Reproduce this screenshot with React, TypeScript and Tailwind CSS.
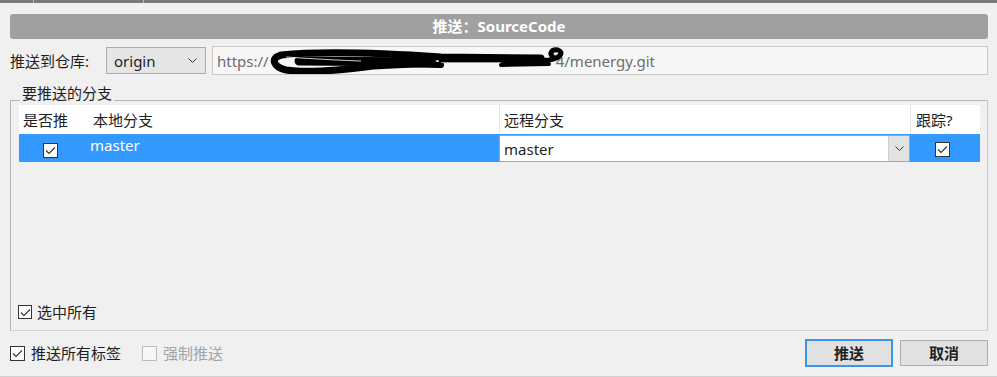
import React from "react";

type CheckProps = {
  checked?: boolean;
  disabled?: boolean;
  size?: number;
};

function Check({ checked = false, disabled = false, size = 15 }: CheckProps) {
  return (
    <span
      className={
        size === 14
          ? "flex h-[14px] w-[14px] shrink-0 items-center justify-center border border-[#333333] bg-white"
          : disabled
            ? "flex h-[15px] w-[15px] shrink-0 items-center justify-center border border-[#bcbcbc] bg-[#f7f7f7]"
            : "flex h-[15px] w-[15px] shrink-0 items-center justify-center border border-[#333333] bg-white"
      }
    >
      {checked && (
        <svg width="11" height="9" viewBox="0 0 11 9" fill="none">
          <polyline points="1,4.5 4,7.5 10,1.5" stroke="#333333" strokeWidth="1.1" />
        </svg>
      )}
    </span>
  );
}

function Chevron() {
  return (
    <svg width="9" height="5" viewBox="0 0 9 5" fill="none">
      <polyline points="0.5,0.5 4.5,4.5 8.5,0.5" stroke="#333333" strokeWidth="1" />
    </svg>
  );
}

// blacked-out part of the url, drawn like a marker scribble
function Scribble() {
  return (
    <svg
      width="296"
      height="27"
      viewBox="268 47 296 27"
      fill="none"
      className="relative z-10 -mr-[9px] shrink-0"
    >
      <g stroke="#000" strokeLinecap="round" strokeLinejoin="round">
        <path d="M278 56 C270 58 272 67 285 70 C305 73 335 71 372 66 L432 63" strokeWidth="7" />
        <path d="M280 55 C320 51 380 53 440 57 L540 58" strokeWidth="7" />
        <path d="M298 61 L430 62" strokeWidth="9" />
        <path d="M390 64 L440 65" strokeWidth="6" />
        <path d="M440 60 C480 60 520 61 548 60 C560 58 563 52 557 50 C550 49 548 54 552 57" strokeWidth="5" />
        <path d="M500 65 L548 64" strokeWidth="4" />
      </g>
      <path d="M440 62.5 L500 62.5" stroke="#9a9a9a" strokeWidth="1" />
      <path d="M285 57 C300 58 330 60 360 61" stroke="#ffffff" strokeWidth="0.8" />
    </svg>
  );
}

export default function App() {
  return (
    <div className="flex h-[377px] w-[997px] flex-col overflow-hidden bg-[#f0f0f0] font-['Noto_Sans','Noto_Sans_CJK_SC',sans-serif] text-[15px] text-[#1e1e1e]">
      {/* strip of the window behind */}
      <div className="flex h-[3px] shrink-0 bg-[#7a7a7a]">
        <div className="w-[33px]" />
        <div className="w-px bg-[#b8b8b8]" />
        <div className="w-[109px]" />
        <div className="w-px bg-[#b8b8b8]" />
      </div>

      <div className="ml-[10px] mr-[9px] mt-[11px] flex h-[25px] items-center justify-center rounded-[3px] bg-[#a0a0a0] text-[15px] font-bold leading-[25px] text-white">
        推送：SourceCode
      </div>

      <div className="ml-[10px] mr-[9px] mt-[7px] flex h-[29px] items-center">
        <div className="w-[96px] leading-[20px]">推送到仓库:</div>
        <div className="flex h-[27px] w-[100px] items-center justify-between border border-[#adadad] bg-[#e5e5e5] pl-[7px] pr-[8px]">
          <span className="leading-[20px]">origin</span>
          <Chevron />
        </div>
        <div className="ml-[6px] flex h-[29px] flex-1 items-center border border-[#c9c9c9] bg-[#f7f7f7] pl-[4px] leading-[20px] text-[#6d6d6d]">
          <span>https://</span>
          <Scribble />
          <span>4/menergy.git</span>
        </div>
      </div>

      <div className="ml-[10px] mr-[9px] mt-[10px] flex flex-col">
        <div className="relative z-10 ml-[10px] h-[17px] w-fit bg-[#f0f0f0] px-[2px] leading-[17px]">
          要推送的分支
        </div>
        <div className="-mt-[2px] flex h-[231px] flex-col border border-[#b5b5b5] border-b-[#d2d2d2] border-r-[#c6c6c6] pb-[8px] pl-[8px] pr-[7px] pt-[4px]">
          <div className="flex h-[29px] bg-white leading-[20px]">
            <div className="flex w-[70px] items-center pl-[4px]">是否推</div>
            <div className="flex w-[410px] items-center pl-[4px]">本地分支</div>
            <div className="flex w-[411px] items-center border-l border-[#e5e5e5] pl-[4px]">远程分支</div>
            <div className="flex w-[70px] items-center border-l border-[#e5e5e5] pl-[5px]">跟踪?</div>
          </div>
          <div className="flex h-[28px] bg-[#3399ff]">
            <div className="flex w-[70px] items-start pl-[24px] pt-[9px]">
              <Check checked />
            </div>
            <div className="w-[410px] pl-[1px] pt-[1px] leading-[20px] text-white">master</div>
            <div className="w-[411px] pt-[1px]">
              <div className="flex h-[27px] border border-[#a5a5a5] bg-white">
                <div className="flex flex-1 items-center pl-[4px] leading-[20px]">master</div>
                <div className="flex w-[21px] items-center justify-center border-l border-[#cfcfcf] bg-[#e3e3e3]">
                  <Chevron />
                </div>
              </div>
            </div>
            <div className="flex w-[70px] items-start pl-[25px] pt-[8px]">
              <Check checked />
            </div>
          </div>
          <div className="flex-1" />
          <div className="-ml-px flex h-[20px] items-center gap-[5px] leading-[20px]">
            <Check checked size={14} />
            <span>选中所有</span>
          </div>
        </div>
      </div>

      <div className="ml-[10px] mr-[9px] mt-[8px] flex h-[28px] items-center leading-[20px]">
        <Check checked />
        <span className="ml-[6px]">推送所有标签</span>
        <span className="ml-[21px] flex items-center">
          <Check disabled />
        </span>
        <span className="ml-[6px] text-[#a3a3a3]">强制推送</span>
        <div className="flex-1" />
        <button
          type="button"
          className="flex h-[28px] w-[88px] items-center justify-center border-2 border-[#3c94e6] bg-[#e1e1e1] font-semibold text-[#222222]"
        >
          推送
        </button>
        <button
          type="button"
          className="ml-[7px] flex h-[26px] w-[88px] items-center justify-center border border-[#adadad] bg-[#e1e1e1] font-semibold text-[#222222]"
        >
          取消
        </button>
      </div>

      <div className="mt-auto h-px bg-[#d0d0d0]" />
    </div>
  );
}
